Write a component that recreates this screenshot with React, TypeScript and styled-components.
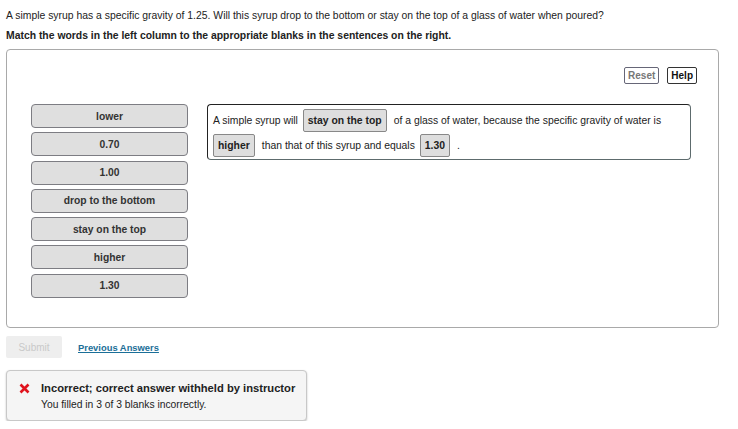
import React from "react";
import styled, { createGlobalStyle } from "styled-components";

const Global = createGlobalStyle`
  html, body { margin: 0; padding: 0; background: #fff; }
  body { font-family: "Liberation Sans", Arial, Helvetica, sans-serif; color: #222; }
`;

const Page = styled.div`
  padding: 10px 6px 0 6px;
  width: 713px;
`;

const Question = styled.p`
  margin: 0;
  font-size: 10.4px;
  line-height: 12px;
  color: #222;
`;

const Instruction = styled.p`
  margin: 8px 0 0 0;
  font-size: 10.4px;
  line-height: 12px;
  font-weight: bold;
  color: #222;
`;

const Panel = styled.div`
  margin-top: 7px;
  border: 1px solid #a9a9a9;
  border-radius: 4px;
  padding: 17px 21px 0 24px;
  box-sizing: border-box;
  height: 279px;
`;

const Toolbar = styled.div`
  display: flex;
  justify-content: flex-end;
  gap: 8px;
`;

const ToolButton = styled.button<{ $primary?: boolean }>`
  font-family: "Liberation Sans", Arial, sans-serif;
  font-size: 10px;
  font-weight: bold;
  height: 17px;
  padding: 0 3px;
  background: #fff;
  border: 1px solid ${(p) => (p.$primary ? "#333" : "#667")};
  border-radius: 2px;
  color: ${(p) => (p.$primary ? "#111" : "#777")};
  line-height: 15px;
`;

const Work = styled.div`
  display: flex;
  align-items: flex-start;
  gap: 19px;
  margin-top: 20px;
`;

const Bank = styled.div`
  display: flex;
  flex-direction: column;
  gap: 4.3px;
  width: 157px;
`;

const Chip = styled.div`
  height: 24px;
  box-sizing: border-box;
  border: 1px solid #7d7d83;
  border-radius: 4px;
  background: #dfdfdf;
  display: flex;
  align-items: center;
  justify-content: center;
  font-size: 10.3px;
  font-weight: bold;
  color: #333;
`;

const Sentence = styled.div`
  width: 484px;
  height: 56px;
  box-sizing: border-box;
  border: 1px solid #222;
  border-right-color: #5d6b6d;
  border-bottom-color: #5d6b6d;
  border-radius: 4px;
  padding: 4px 6px 0 5px;
  font-size: 10.4px;
  color: #222;
`;

const Line = styled.div`
  display: flex;
  align-items: center;
  height: 23px;
  white-space: pre;
  & + & { margin-top: 2px; }
`;

const Blank = styled.span<{ $first?: boolean }>`
  display: inline-flex;
  align-items: center;
  justify-content: center;
  height: 23px;
  padding: 0 4px;
  box-sizing: border-box;
  border: 1px solid #888;
  border-radius: 2px;
  background: #dedede;
  font-weight: bold;
  color: #222;
  margin: 0 7px 0 ${(p) => (p.$first ? "0" : "2px")};
`;

const Actions = styled.div`
  display: flex;
  align-items: center;
  gap: 16px;
  margin-top: 8px;
`;

const Submit = styled.button`
  width: 56px;
  height: 22px;
  border: none;
  border-radius: 2px;
  background: #eeeeee;
  color: #c9c9c9;
  font-family: "Liberation Sans", Arial, sans-serif;
  font-size: 10px;
`;

const PrevLink = styled.a`
  font-size: 9.4px;
  font-weight: bold;
  color: #1b6f98;
  text-decoration: underline;
`;

const Feedback = styled.div`
  margin-top: 12px;
  width: 301px;
  height: 51px;
  box-sizing: border-box;
  border: 1px solid #c8c8c8;
  border-radius: 4px;
  background: #f5f5f5;
  box-shadow: 0 1px 2px rgba(0,0,0,0.25);
  display: flex;
  align-items: flex-start;
  padding: 11px 0 0 12px;
  gap: 11px;
`;

const FeedbackText = styled.div`
  display: flex;
  flex-direction: column;
  gap: 3px;
`;

const FeedbackTitle = styled.div`
  font-size: 11.2px;
  font-weight: bold;
  color: #222;
  line-height: 13px;
`;

const FeedbackSub = styled.div`
  font-size: 10.3px;
  color: #222;
  line-height: 13px;
`;

const Cross = () => (
  <svg width="11" height="11" viewBox="0 0 11 11" style={{ marginTop: 1 }}>
    <path d="M1.5 1.5 L9.5 9.5 M9.5 1.5 L1.5 9.5" stroke="#e0141e" strokeWidth="2.6" strokeLinecap="butt" />
  </svg>
);

const words = ["lower", "0.70", "1.00", "drop to the bottom", "stay on the top", "higher", "1.30"];

export default function App() {
  return (
    <>
      <Global />
      <Page>
        <Question>
          A simple syrup has a specific gravity of 1.25. Will this syrup drop to the bottom or stay on the top of a glass of water when poured?
        </Question>
        <Instruction>Match the words in the left column to the appropriate blanks in the sentences on the right.</Instruction>
        <Panel>
          <Toolbar>
            <ToolButton>Reset</ToolButton>
            <ToolButton $primary>Help</ToolButton>
          </Toolbar>
          <Work>
            <Bank>
              {words.map((w) => (
                <Chip key={w}>{w}</Chip>
              ))}
            </Bank>
            <Sentence>
              <Line>
                {"A simple syrup will "}<Blank>stay on the top</Blank>{"of a glass of water, because the specific gravity of water is"}
              </Line>
              <Line>
                <Blank $first>higher</Blank>{"than that of this syrup and equals "}<Blank>1.30</Blank>.
              </Line>
            </Sentence>
          </Work>
        </Panel>
        <Actions>
          <Submit>Submit</Submit>
          <PrevLink href="#">Previous Answers</PrevLink>
        </Actions>
        <Feedback>
          <Cross />
          <FeedbackText>
            <FeedbackTitle>Incorrect; correct answer withheld by instructor</FeedbackTitle>
            <FeedbackSub>You filled in 3 of 3 blanks incorrectly.</FeedbackSub>
          </FeedbackText>
        </Feedback>
      </Page>
    </>
  );
}
